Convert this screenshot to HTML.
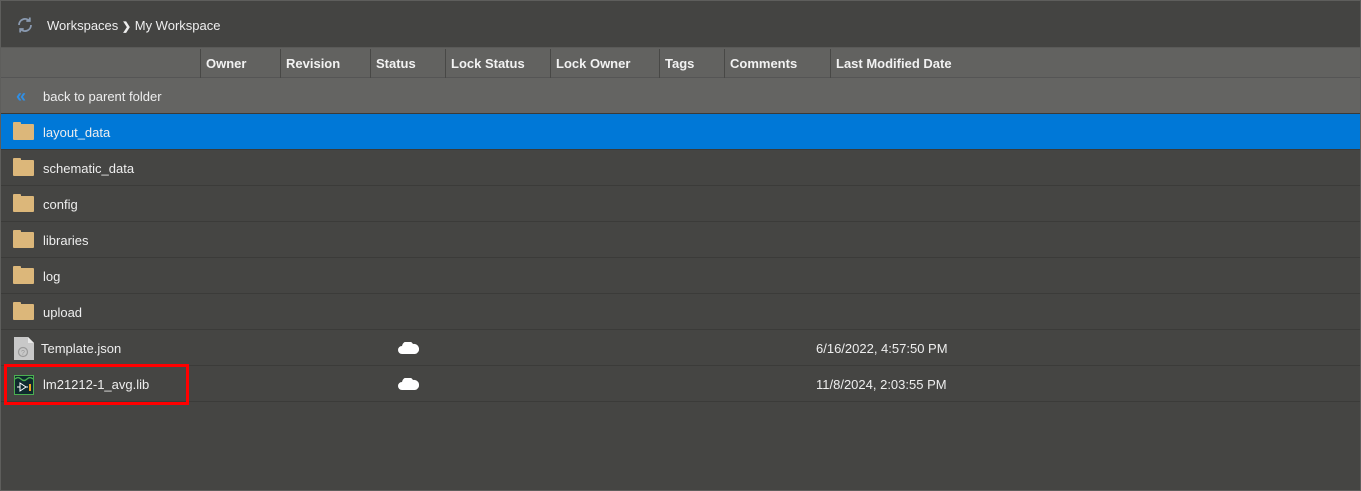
<!DOCTYPE html><html><head><style>
body{margin:0;width:1361px;height:491px;background:#454543;font-family:"Liberation Sans",sans-serif;font-size:13px;color:#eee;overflow:hidden;position:relative}
.frame{position:absolute;left:0;top:0;width:1359px;height:489px;border:1px solid #5e5e5c}
.top{position:absolute;left:1px;top:1px;width:1359px;height:46px;background:#444442;border-bottom:1px solid #5a5a58}
.hdr{position:absolute;left:1px;top:48px;width:1359px;height:29px;background:#626260;border-bottom:1px solid #555}
.hdr div{position:absolute;top:1px;height:29px;line-height:29px;border-left:1px solid #484846;padding-left:5px;font-weight:bold;color:#f2f2f2}
.back{position:absolute;left:1px;top:78px;width:1359px;height:35px;background:#646462;border-bottom:1px solid #3a3a38;line-height:38px}
.row{position:absolute;left:1px;width:1359px;height:35px;border-bottom:1px solid #3b3b39;line-height:37px}
.sel{background:#0078d7}
.fold{position:absolute;left:12px;top:10px;width:21px;height:16px;background:#dcb77a;border-radius:1px}
.fold:before{content:"";position:absolute;left:0;top:-2px;width:8px;height:3px;background:#dcb77a;border-radius:1px 1px 0 0}
.nm{position:absolute;left:42px}
.cloud{position:absolute;left:397px;top:12px}
.dt{position:absolute;left:815px}
</style></head><body>
<div class="frame"></div>
<div class="top">
<svg style="position:absolute;left:15px;top:15px" width="18" height="18" viewBox="0 0 18 18" fill="none" stroke="#8a9ab0" stroke-width="1.8"><path d="M3 9a6 6 0 0 1 10.5-4"/><path d="M15 9a6 6 0 0 1-10.5 4"/><path d="M13.8 1.5v3.5h-3.5" /><path d="M4.2 16.5v-3.5h3.5"/></svg>
<span style="position:absolute;left:46px;top:17px;color:#eee">Workspaces <b style="font-size:11px">&#x276F;</b> My Workspace</span></div>
<div class="hdr">
<div style="left:199px;width:74px">Owner</div><div style="left:279px;width:84px">Revision</div><div style="left:369px;width:70px">Status</div><div style="left:444px;width:100px">Lock Status</div><div style="left:549px;width:104px">Lock Owner</div><div style="left:658px;width:60px">Tags</div><div style="left:723px;width:100px">Comments</div><div style="left:829px;width:525px">Last Modified Date</div>
</div>
<div class="back"><span style="position:absolute;left:15px;top:-1px;color:#2f8fe6;font-weight:bold;font-size:18px;letter-spacing:-3px">&#x00AB;</span><span class="nm">back to parent folder</span></div>
<div class="row sel" style="top:114px"><div class="fold"></div><span class="nm">layout_data</span></div>
<div class="row" style="top:150px"><div class="fold"></div><span class="nm">schematic_data</span></div>
<div class="row" style="top:186px"><div class="fold"></div><span class="nm">config</span></div>
<div class="row" style="top:222px"><div class="fold"></div><span class="nm">libraries</span></div>
<div class="row" style="top:258px"><div class="fold"></div><span class="nm">log</span></div>
<div class="row" style="top:294px"><div class="fold"></div><span class="nm">upload</span></div>
<div class="row" style="top:330px"><svg style="position:absolute;left:13px;top:7px" width="20" height="23" viewBox="0 0 20 23"><path d="M0 0h14l6 6v17H0z" fill="#c8c8c8"/><path d="M14 0v6h6" fill="#e8e8e8"/><circle cx="9" cy="15" r="4.5" fill="none" stroke="#999" stroke-width="1.2"/><text x="9" y="18" font-size="7" fill="#999" text-anchor="middle" font-family="Liberation Sans">?</text></svg><span class="nm" style="left:40px">Template.json</span>
<svg class="cloud" width="21" height="12" viewBox="0 0 21 12"><path d="M4 12a4 4 0 0 1 0-8 6 6 0 0 1 11-2 5 5 0 0 1 2 10z" fill="#fff"/></svg><span class="dt">6/16/2022, 4:57:50 PM</span></div>
<div class="row" style="top:366px"><svg style="position:absolute;left:13px;top:9px" width="20" height="20" viewBox="0 0 20 20"><rect x="0.5" y="0.5" width="19" height="19" fill="#0f2a2e" stroke="#4caf50"/><path d="M1 4q3 -3 6 0t6 0 6 0" stroke="#4caf50" fill="none" stroke-width="1.3"/><path d="M6 8v8l6-4z" stroke="#fff" fill="none"/><path d="M3 12h3M12 12h2" stroke="#fff"/><rect x="15" y="9" width="2" height="7" fill="#f0a020"/></svg><span class="nm">lm21212-1_avg.lib</span>
<svg class="cloud" width="21" height="12" viewBox="0 0 21 12"><path d="M4 12a4 4 0 0 1 0-8 6 6 0 0 1 11-2 5 5 0 0 1 2 10z" fill="#fff"/></svg><span class="dt">11/8/2024, 2:03:55 PM</span></div>
<div style="position:absolute;left:4px;top:364px;width:179px;height:35px;border:3px solid #f00"></div>
</body></html>
